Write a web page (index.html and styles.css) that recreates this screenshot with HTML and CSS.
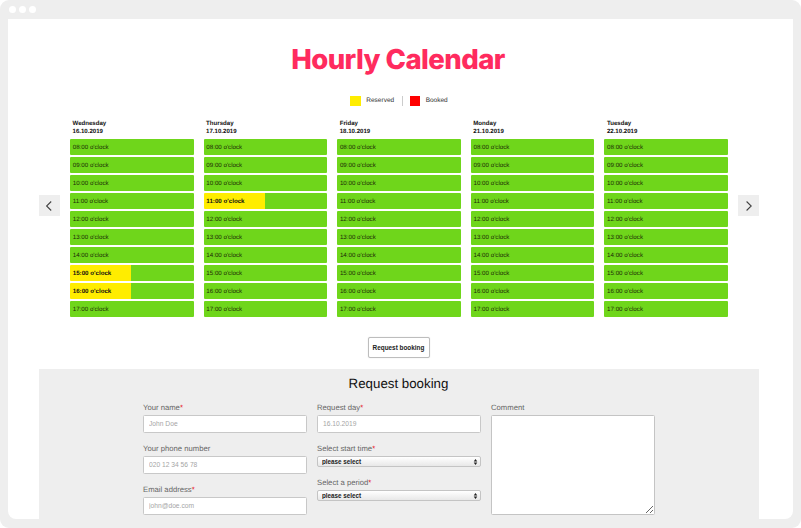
FILE: index.html
```html
<!DOCTYPE html>
<html lang="en">
<head>
<meta charset="utf-8">
<title>Hourly Calendar</title>
<link rel="stylesheet" href="styles.css">
</head>
<body>
<div class="window">
  <div class="dots"><span class="dot"></span><span class="dot"></span><span class="dot"></span></div>
  <main class="page">
    <h1 class="title">Hourly Calendar</h1>
    <div class="legend">
      <span class="swatch swatch-reserved"></span><span class="legend-text">Reserved</span>
      <span class="legend-sep"></span>
      <span class="swatch swatch-booked"></span><span class="legend-text">Booked</span>
    </div>
    <div class="calendar">
      <button class="nav" type="button" aria-label="Previous"><svg width="21" height="21" viewBox="0 0 21 21"><path d="M12.2 6.5 7.6 11l4.6 4.5" fill="none" stroke="#444" stroke-width="1.1"/></svg></button>
      <div class="days">
        <section class="day">
          <h2 class="day-head">Wednesday<br>16.10.2019</h2>
          <div class="slot">08:00 o'clock</div><div class="slot">09:00 o'clock</div><div class="slot">10:00 o'clock</div><div class="slot">11:00 o'clock</div><div class="slot">12:00 o'clock</div><div class="slot">13:00 o'clock</div><div class="slot">14:00 o'clock</div><div class="slot reserved">15:00 o'clock</div><div class="slot reserved">16:00 o'clock</div><div class="slot">17:00 o'clock</div>
        </section>
        <section class="day">
          <h2 class="day-head">Thursday<br>17.10.2019</h2>
          <div class="slot">08:00 o'clock</div><div class="slot">09:00 o'clock</div><div class="slot">10:00 o'clock</div><div class="slot reserved">11:00 o'clock</div><div class="slot">12:00 o'clock</div><div class="slot">13:00 o'clock</div><div class="slot">14:00 o'clock</div><div class="slot">15:00 o'clock</div><div class="slot">16:00 o'clock</div><div class="slot">17:00 o'clock</div>
        </section>
        <section class="day">
          <h2 class="day-head">Friday<br>18.10.2019</h2>
          <div class="slot">08:00 o'clock</div><div class="slot">09:00 o'clock</div><div class="slot">10:00 o'clock</div><div class="slot">11:00 o'clock</div><div class="slot">12:00 o'clock</div><div class="slot">13:00 o'clock</div><div class="slot">14:00 o'clock</div><div class="slot">15:00 o'clock</div><div class="slot">16:00 o'clock</div><div class="slot">17:00 o'clock</div>
        </section>
        <section class="day">
          <h2 class="day-head">Monday<br>21.10.2019</h2>
          <div class="slot">08:00 o'clock</div><div class="slot">09:00 o'clock</div><div class="slot">10:00 o'clock</div><div class="slot">11:00 o'clock</div><div class="slot">12:00 o'clock</div><div class="slot">13:00 o'clock</div><div class="slot">14:00 o'clock</div><div class="slot">15:00 o'clock</div><div class="slot">16:00 o'clock</div><div class="slot">17:00 o'clock</div>
        </section>
        <section class="day">
          <h2 class="day-head">Tuesday<br>22.10.2019</h2>
          <div class="slot">08:00 o'clock</div><div class="slot">09:00 o'clock</div><div class="slot">10:00 o'clock</div><div class="slot">11:00 o'clock</div><div class="slot">12:00 o'clock</div><div class="slot">13:00 o'clock</div><div class="slot">14:00 o'clock</div><div class="slot">15:00 o'clock</div><div class="slot">16:00 o'clock</div><div class="slot">17:00 o'clock</div>
        </section>
      </div>
      <button class="nav" type="button" aria-label="Next"><svg width="21" height="21" viewBox="0 0 21 21"><path d="M8.6 6.5 13.2 11l-4.6 4.5" fill="none" stroke="#444" stroke-width="1.1"/></svg></button>
    </div>
    <div class="request-row"><button class="request-btn" type="button">Request booking</button></div>
    <section class="panel">
      <h2 class="panel-title">Request booking</h2>
      <form class="form">
        <div class="form-col">
          <label class="field"><span class="label">Your name<em class="req">*</em></span><input class="input" type="text" placeholder="John Doe"></label>
          <label class="field"><span class="label">Your phone number</span><input class="input" type="text" placeholder="020 12 34 56 78"></label>
          <label class="field"><span class="label">Email address<em class="req">*</em></span><input class="input" type="text" placeholder="john@doe.com"></label>
        </div>
        <div class="form-col">
          <label class="field"><span class="label">Request day<em class="req">*</em></span><input class="input" type="text" placeholder="16.10.2019"></label>
          <label class="field field-select"><span class="label">Select start time<em class="req">*</em></span>
            <span class="select-wrap"><select class="select"><option>please select</option></select><svg class="select-arrows" width="5" height="8" viewBox="0 0 5 8"><path d="M2.5 1 4.3 3.4H.7zM2.5 7 .7 4.6h3.6z" fill="#222"/></svg></span></label>
          <label class="field field-select"><span class="label">Select a period<em class="req">*</em></span>
            <span class="select-wrap"><select class="select"><option>please select</option></select><svg class="select-arrows" width="5" height="8" viewBox="0 0 5 8"><path d="M2.5 1 4.3 3.4H.7zM2.5 7 .7 4.6h3.6z" fill="#222"/></svg></span></label>
        </div>
        <div class="form-col">
          <label class="field"><span class="label">Comment</span><textarea class="textarea"></textarea></label>
        </div>
      </form>
    </section>
  </main>
</div>
</body>
</html>
```

FILE: styles.css
```css
* { box-sizing: border-box; }
html, body { margin: 0; padding: 0; background: #fff; }
body { width: 801px; height: 528px; overflow: hidden; font-family: "Liberation Sans", Arial, sans-serif; text-rendering: geometricPrecision; }

.window {
  width: 801px;
  height: 528px;
  background: #eeeeee;
  border-radius: 9px;
  padding: 0 8px 9px;
  display: flex;
  flex-direction: column;
}
.dots { height: 19px; flex: none; display: flex; align-items: center; gap: 3px; padding-left: 0.5px; }
.dot { width: 7px; height: 7px; border-radius: 50%; background: #fff; }

.page {
  flex: 1;
  min-height: 0;
  background: #fff;
  border-radius: 0 0 8px 8px;
  padding: 0 34px 0 31px;
  overflow: hidden;
  display: flex;
  flex-direction: column;
}

.title {
  margin: 22px 2px 0 0;
  height: 36px;
  line-height: 36px;
  text-align: center;
  font-family: Inter, "Liberation Sans", sans-serif;
  font-size: 27.5px;
  font-weight: 800;
  letter-spacing: -0.55px;
  color: #ff2b5e;
}

.legend { margin-top: 18.5px; height: 10.5px; display: flex; align-items: center; justify-content: center; }
.swatch { width: 10.5px; height: 10.5px; flex: none; }
.swatch-reserved { background: #ffed00; }
.swatch-booked { background: #ff0000; }
.legend-text { margin-left: 5.5px; font-size: 6.5px; line-height: 11.5px; color: #333; }
.legend-sep { width: 1px; height: 10px; background: #ccc; margin: 0 6.5px 0 8px; }

.calendar { margin-top: 13px; display: flex; gap: 10px; align-items: flex-start; }
.nav { flex: none; width: 21px; height: 21px; margin-top: 76px; padding: 0; border: 0; background: #eeeeee; display: flex; }
.days { flex: 1; min-width: 0; display: grid; grid-template-columns: repeat(5, 1fr); column-gap: 10px; }
.day { min-width: 0; }
.day-head { margin: 0; padding: 0.5px 0 0 2.5px; height: 20px; font-size: 6.1px; line-height: 8px; font-weight: 700; color: #111; }
.slot {
  height: 15.5px;
  margin-bottom: 2.5px;
  padding-left: 2.7px;
  line-height: 17px;
  font-size: 6.2px;
  color: #1c2a06;
  background: #6fd61b;
  border-radius: 1px;
}
.slot.reserved { font-weight: 700; color: #111; background: linear-gradient(to right, #ffed00 49.5%, #6fd61b 49.5%); }

.request-row { margin-top: 17.5px; display: flex; justify-content: center; flex: none; }
.request-btn {
  width: 62px;
  height: 21.5px;
  margin-left: -1px;
  padding: 0;
  background: #fff;
  border: 1px solid #bdbdbd;
  border-radius: 2px;
  box-shadow: 0 0 1px #ccc;
  font-family: "Liberation Sans", sans-serif;
  font-size: 6.4px;
  font-weight: 700;
  color: #222;
}

.panel { margin-top: 10.5px; background: #eeeeee; flex: 1; min-height: 0; overflow: hidden; padding-top: 7px; }
.panel-title { margin: 0; text-align: center; font-size: 13.3px; line-height: 15px; font-weight: 400; color: #111; margin-left: -1px; }
.form { margin: 12px 0 0 104px; display: flex; gap: 10.5px; }
.form-col { width: 163.5px; flex: none; }
.field { display: block; margin-bottom: 11px; }
.label { display: block; height: 12px; line-height: 10px; font-size: 7.7px; color: #666; }
.req { font-style: normal; color: #e8141e; }
.input {
  display: block;
  width: 100%;
  height: 18px;
  padding: 0 5px;
  background: #fff;
  border: 1px solid #c8c8c8;
  border-radius: 1.5px;
  font-family: "Liberation Sans", sans-serif;
  font-size: 6.7px;
}
.input::placeholder { color: #a5a5a5; opacity: 1; }
.field-select .label { height: 12.5px; }
.select-wrap { position: relative; display: block; height: 10.5px; }
.select {
  display: block;
  width: 100%;
  height: 10.5px;
  padding: 0 0 0 4px;
  appearance: none;
  -webkit-appearance: none;
  background: linear-gradient(#ffffff, #e8e8e8);
  border: 1px solid #c4c4c4;
  border-radius: 2px;
  font-family: "Liberation Sans", sans-serif;
  font-size: 6.3px;
  font-weight: 700;
  color: #222;
}
.select-arrows { position: absolute; right: 3px; top: 1.5px; }
.textarea {
  display: block;
  width: 100%;
  height: 100px;
  background: #fff;
  border: 1px solid #c4c4c4;
  border-radius: 1.5px;
}
```
